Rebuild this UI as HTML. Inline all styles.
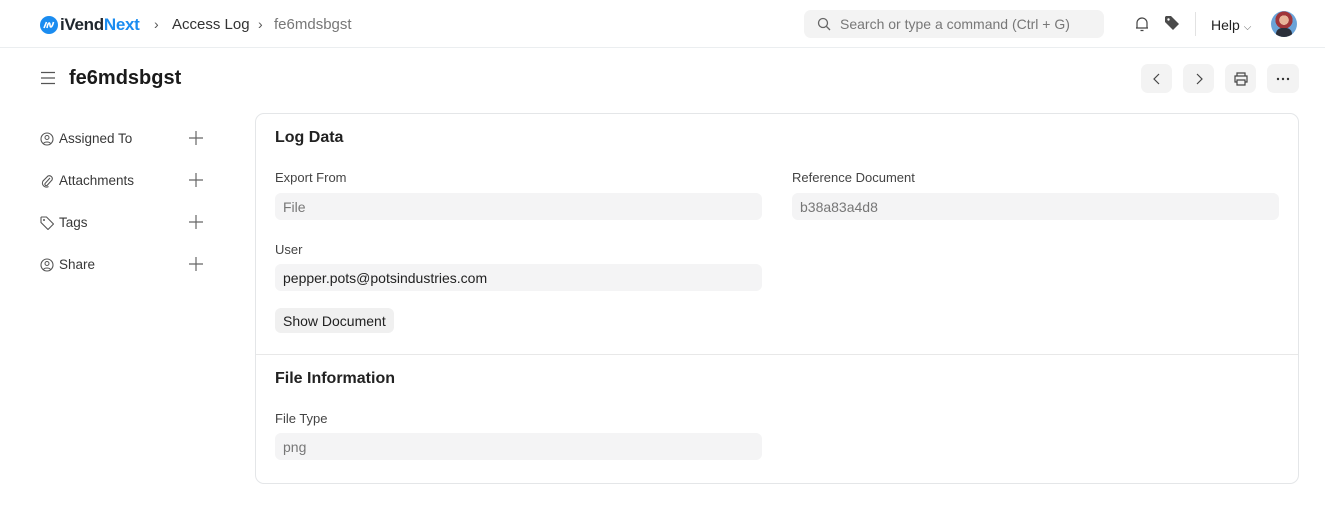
<!DOCTYPE html>
<html><head><meta charset="utf-8"><style>
*{box-sizing:border-box;margin:0;padding:0}
body{width:1325px;height:505px;background:#fff;font-family:"Liberation Sans",sans-serif;color:#1f272e;position:relative;overflow:hidden;font-size:13px}
.abs{position:absolute}
.nav{position:absolute;left:0;top:0;width:1325px;height:48px;border-bottom:1px solid #ebeef0}
.btn{position:absolute;top:64px;width:31px;height:29px;background:#f3f3f3;border-radius:7px;display:flex;align-items:center;justify-content:center}
.side{position:absolute;left:40px;font-size:13.5px;color:#383838;display:flex;align-items:center;gap:5px}
.plus{position:absolute;left:188px;width:16px;height:16px}
.card{position:absolute;left:255px;top:113px;width:1044px;height:371px;border:1px solid #e4e6e8;border-radius:9px}
.lbl{position:absolute;font-size:13px;color:#444}
.inp{position:absolute;height:27px;background:#f4f4f5;border-radius:6px;font-size:14px;color:#777;padding:6px 8px}
h3{position:absolute;font-size:16px;font-weight:bold;color:#222}
</style></head><body>
<div class="nav">
 <svg class="abs" style="left:40px;top:16px" width="18" height="18" viewBox="0 0 18 18"><circle cx="9" cy="9" r="9" fill="#1a8cf0"/><path d="M4 12 L6.5 6 M7 12 C8 6 10 6 10 9 C10 12 12 12 13.5 6" stroke="#fff" stroke-width="1.6" fill="none"/></svg>
 <div class="abs" style="left:60px;top:15px;font-size:17px;font-weight:bold;letter-spacing:-0.3px">iVend<span style="color:#1a8cf0">Next</span></div>
 <div class="abs" style="left:154px;top:16px;font-size:14px;color:#555">›</div>
 <div class="abs" style="left:172px;top:16px;font-size:15px;color:#333">Access Log</div>
 <div class="abs" style="left:258px;top:16px;font-size:14px;color:#555">›</div>
 <div class="abs" style="left:274px;top:16px;font-size:15px;color:#777">fe6mdsbgst</div>
 <div class="abs" style="left:804px;top:10px;width:300px;height:28px;background:#f3f3f3;border-radius:7px"></div>
 <svg class="abs" style="left:817px;top:17px" width="14" height="14" viewBox="0 0 14 14"><circle cx="6" cy="6" r="4.5" stroke="#666" stroke-width="1.3" fill="none"/><path d="M9.5 9.5L13 13" stroke="#666" stroke-width="1.3"/></svg>
 <div class="abs" style="left:840px;top:16px;font-size:14px;color:#777">Search or type a command (Ctrl + G)</div>
 <svg class="abs" style="left:1134px;top:15px" width="16" height="18" viewBox="0 0 16 18"><path d="M3 13 V8 a5 5 0 0 1 10 0 V13 H2 H14 M6.5 15.5 h3" stroke="#444" stroke-width="1.2" fill="none"/></svg>
 <svg class="abs" style="left:1164px;top:15px" width="16" height="16" viewBox="0 0 16 16"><path d="M1 2 V7 L9 15 L15 9 L7 1 H2 Z" fill="#4a4a4a"/><circle cx="4.5" cy="4.5" r="1.2" fill="#fff"/></svg>
 <div class="abs" style="left:1195px;top:12px;width:1px;height:24px;background:#e2e2e2"></div>
 <div class="abs" style="left:1211px;top:17px;font-size:14px;color:#222">Help <span style="font-size:10px;color:#666">⌵</span></div>
 <div class="abs" style="left:1271px;top:11px;width:26px;height:26px;border-radius:50%;background:radial-gradient(circle at 50% 35%,#e8b49a 0 22%,#a0353a 23% 40%,#6aa3d8 41%);overflow:hidden"><div style="position:absolute;left:5px;top:17px;width:16px;height:10px;background:#2a2f3a;border-radius:6px 6px 0 0"></div></div>
</div>
<svg class="abs" style="left:40px;top:71px" width="16" height="14" viewBox="0 0 16 14"><path d="M1 1.5H15M1 7H15M1 12.5H15" stroke="#555" stroke-width="1.2"/></svg>
<div class="abs" style="left:69px;top:67px;font-size:20px;font-weight:bold;color:#1a1a1a">fe6mdsbgst</div>
<div class="btn" style="left:1141px"><svg width="10" height="12"><path d="M7 1L2 6L7 11" stroke="#444" stroke-width="1.2" fill="none"/></svg></div>
<div class="btn" style="left:1183px"><svg width="10" height="12"><path d="M3 1L8 6L3 11" stroke="#444" stroke-width="1.2" fill="none"/></svg></div>
<div class="btn" style="left:1225px"><svg width="16" height="14" viewBox="0 0 16 14"><path d="M4 4V1H12V4M4 10H2V4H14V10H12M4 8H12V13H4Z" stroke="#444" stroke-width="1.2" fill="none"/></svg></div>
<div class="btn" style="left:1267px;width:32px"><svg width="14" height="4"><circle cx="2" cy="2" r="1.2" fill="#333"/><circle cx="7" cy="2" r="1.2" fill="#333"/><circle cx="12" cy="2" r="1.2" fill="#333"/></svg></div>

<div class="side" style="top:131px"><svg width="14" height="14" viewBox="0 0 14 14"><circle cx="7" cy="7" r="6" stroke="#555" fill="none" stroke-width="1.1"/><circle cx="7" cy="5.5" r="2" stroke="#555" fill="none"/><path d="M3.5 11.5c1-2 6-2 7 0" stroke="#555" fill="none"/></svg>Assigned To</div>
<div class="side" style="top:173px"><svg width="14" height="14" viewBox="0 0 14 14"><path d="M10 4L5 9.5a1.5 1.5 0 0 0 2 2L12 6a3 3 0 0 0-4-4L3 7a4 4 0 0 0 5.5 5.5" stroke="#555" fill="none" stroke-width="1.1"/></svg>Attachments</div>
<div class="side" style="top:215px"><svg width="14" height="14" viewBox="0 0 14 14"><path d="M1 1.5V6.5L8 13.5L13.5 8L6.5 1H1.5Z" stroke="#555" fill="none" stroke-width="1.1"/><circle cx="4" cy="4" r="1" fill="#555"/></svg>Tags</div>
<div class="side" style="top:257px"><svg width="14" height="14" viewBox="0 0 14 14"><circle cx="7" cy="7" r="6" stroke="#555" fill="none" stroke-width="1.1"/><circle cx="7" cy="5.5" r="2" stroke="#555" fill="none"/><path d="M3.5 11.5c1-2 6-2 7 0" stroke="#555" fill="none"/></svg>Share</div>
<svg class="plus" style="top:130px" viewBox="0 0 16 16"><path d="M8 1V15M1 8H15" stroke="#666" stroke-width="1.2"/></svg>
<svg class="plus" style="top:172px" viewBox="0 0 16 16"><path d="M8 1V15M1 8H15" stroke="#666" stroke-width="1.2"/></svg>
<svg class="plus" style="top:214px" viewBox="0 0 16 16"><path d="M8 1V15M1 8H15" stroke="#666" stroke-width="1.2"/></svg>
<svg class="plus" style="top:256px" viewBox="0 0 16 16"><path d="M8 1V15M1 8H15" stroke="#666" stroke-width="1.2"/></svg>

<div class="card">
 <h3 style="left:19px;top:15px">Log Data</h3>
 <div class="lbl" style="left:19px;top:56px">Export From</div>
 <div class="inp" style="left:19px;top:79px;width:487px">File</div>
 <div class="lbl" style="left:536px;top:56px">Reference Document</div>
 <div class="inp" style="left:536px;top:79px;width:487px">b38a83a4d8</div>
 <div class="lbl" style="left:19px;top:128px">User</div>
 <div class="inp" style="left:19px;top:150px;width:487px;color:#222">pepper.pots@potsindustries.com</div>
 <div class="abs" style="left:19px;top:194px;height:25px;padding:5px 8px;background:#f0f0f0;border-radius:6px;font-size:14px;color:#222">Show Document</div>
 <div class="abs" style="left:0;top:240px;width:1042px;height:1px;background:#e8e8e8"></div>
 <h3 style="left:19px;top:256px">File Information</h3>
 <div class="lbl" style="left:19px;top:297px">File Type</div>
 <div class="inp" style="left:19px;top:319px;width:487px">png</div>
</div>
</body></html>
